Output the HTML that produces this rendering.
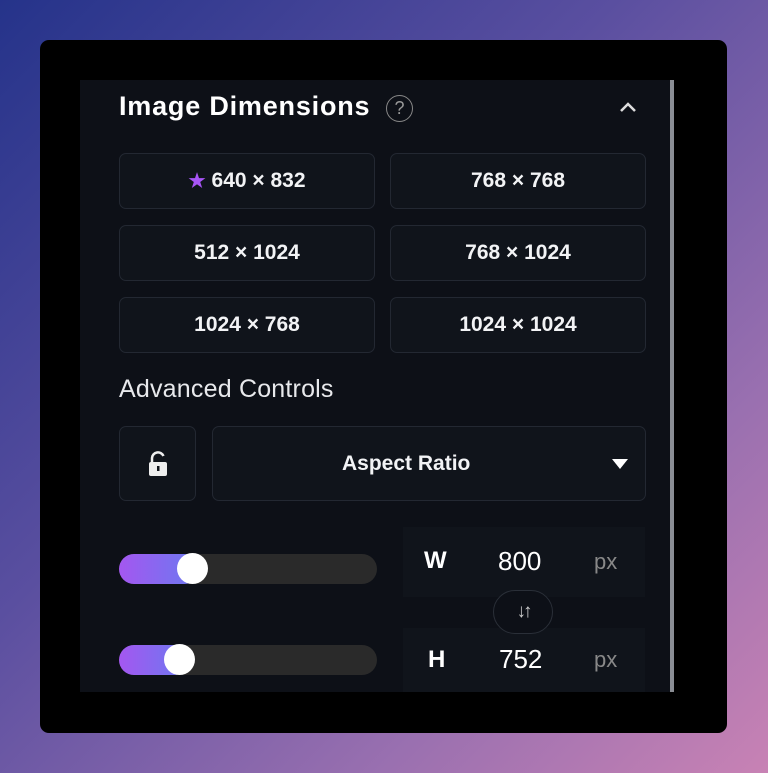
<!DOCTYPE html>
<html><head><style>
*{margin:0;padding:0;box-sizing:border-box}
body{width:768px;height:773px;overflow:hidden;background:linear-gradient(135deg,#25338a 0%,#5a4fa0 40%,#9a70b0 75%,#c882b4 100%);font-family:"Liberation Sans",sans-serif;position:relative}
.card{position:absolute;left:40px;top:40px;width:687px;height:693px;background:#000;border-radius:9px}
.panel{position:absolute;left:80px;top:80px;width:592px;height:612px;background:#0d1017}
.sb{position:absolute;left:670px;top:80px;width:4px;height:612px;background:#8a8d94}
.abs{position:absolute}
.btn{position:absolute;width:256px;height:56px;border:1.5px solid #232832;border-radius:7px;background:#10141b;color:#f2f3f5;font-size:21px;font-weight:bold;display:flex;align-items:center;justify-content:center}
.t{color:#fff}
</style></head><body>
<div class="card"></div>
<div class="panel"></div>
<div class="sb"></div>
<div class="abs t" style="left:119px;top:91px;font-size:27px;font-weight:bold;letter-spacing:0.8px">Image Dimensions</div>
<div class="abs" style="left:386px;top:95px;width:27px;height:27px;border:1.5px solid #888;border-radius:50%;color:#999;font-size:18px;text-align:center;line-height:24px">?</div>
<svg class="abs" style="left:618px;top:100px" width="20" height="14"><path d="M3 11 L10 4 L17 11" stroke="#ddd" stroke-width="2.5" fill="none"/></svg>
<div class="btn" style="left:119px;top:153px"><span style="color:#a855f7;font-size:19px;margin-right:6px">★</span>640 × 832</div>
<div class="btn" style="left:390px;top:153px">768 × 768</div>
<div class="btn" style="left:119px;top:225px">512 × 1024</div>
<div class="btn" style="left:390px;top:225px">768 × 1024</div>
<div class="btn" style="left:119px;top:297px">1024 × 768</div>
<div class="btn" style="left:390px;top:297px">1024 × 1024</div>
<div class="abs" style="left:119px;top:375px;font-size:25px;letter-spacing:0.2px;color:#e8e9ec">Advanced Controls</div>
<div class="btn" style="left:119px;top:426px;width:77px;height:75px">
<svg width="22" height="26" viewBox="0 0 22 26"><path d="M5 11 V7 a6 6 0 0 1 11.5 -2" stroke="#eee" stroke-width="2.5" fill="none"/><rect x="2" y="11" width="18" height="14" rx="2" fill="#eee"/><rect x="10" y="15" width="2.5" height="5" fill="#10141b"/></svg></div>
<div class="btn" style="left:212px;top:426px;width:434px;height:75px;font-size:21px;justify-content:flex-start;padding-left:129px">Aspect Ratio
<svg class="abs" style="left:398px;top:31px" width="18" height="12"><path d="M1 1 H17 L9 11 Z" fill="#fff"/></svg></div>
<div class="abs" style="left:403px;top:527px;width:242px;height:70px;background:#10141b"></div>
<div class="abs" style="left:403px;top:628px;width:242px;height:64px;background:#10141b"></div>
<div class="abs" style="left:119px;top:554px;width:258px;height:30px;border-radius:15px;background:#2a2a2a"></div>
<div class="abs" style="left:119px;top:554px;width:80px;height:30px;border-radius:15px;background:linear-gradient(90deg,#a457f0,#6a7af0)"></div>
<div class="abs" style="left:177px;top:553px;width:31px;height:31px;border-radius:50%;background:#fff"></div>
<div class="abs" style="left:119px;top:645px;width:258px;height:30px;border-radius:15px;background:#2a2a2a"></div>
<div class="abs" style="left:119px;top:645px;width:70px;height:30px;border-radius:15px;background:linear-gradient(90deg,#a457f0,#6a7af0)"></div>
<div class="abs" style="left:164px;top:644px;width:31px;height:31px;border-radius:50%;background:#fff"></div>
<div class="abs t" style="left:424px;top:547px;font-size:24px;font-weight:bold">W</div>
<div class="abs t" style="left:498px;top:546px;font-size:26px">800</div>
<div class="abs" style="left:594px;top:549px;font-size:22px;color:#888">px</div>
<div class="abs" style="left:493px;top:590px;width:60px;height:44px;border:1.5px solid #2a2f38;border-radius:22px;background:#0d1017;display:flex;align-items:center;justify-content:center;font-size:19px;color:#ccc;letter-spacing:-3px">↓↑</div>
<div class="abs t" style="left:428px;top:646px;font-size:24px;font-weight:bold">H</div>
<div class="abs t" style="left:499px;top:644px;font-size:26px">752</div>
<div class="abs" style="left:594px;top:647px;font-size:22px;color:#888">px</div>
</body></html>
